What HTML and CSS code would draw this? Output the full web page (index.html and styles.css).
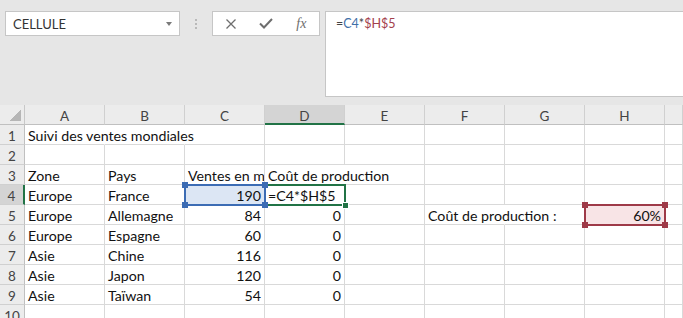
FILE: index.html
```html
<!DOCTYPE html>
<html lang="fr">
<head>
<meta charset="utf-8">
<title>Excel</title>
<link rel="stylesheet" href="styles.css">
</head>
<body>
<div class="app">
  <div class="fbar">
    <div class="namebox"><span>CELLULE</span><span class="dd"></span></div>
    <div class="grip"><i></i><i></i><i></i></div>
    <div class="btns">
      <span class="btn"><svg width="12" height="12" viewBox="0 0 12 12"><path d="M1.5 1.5 L10.5 10.5 M10.5 1.5 L1.5 10.5" stroke="#6e6e6e" stroke-width="1.3" fill="none"/></svg></span>
      <span class="btn"><svg width="14" height="11" viewBox="0 0 14 11"><path d="M1 5.5 L5 9.5 L13 1" stroke="#6e6e6e" stroke-width="2" fill="none"/></svg></span>
      <span class="btn fx">fx</span>
    </div>
    <div class="finput"><span>=</span><span class="rb">C4</span><span>*</span><span class="rr">$H$5</span></div>
  </div>
  <div class="sheet">
    <div class="corner"></div>
    <div class="ch">A</div><div class="ch">B</div><div class="ch">C</div><div class="ch chs">D</div><div class="ch">E</div><div class="ch">F</div><div class="ch">G</div><div class="ch">H</div><div class="ch"></div>

    <div class="rh">1</div>
    <div class="c nr">Suivi des ventes mondiales</div><div class="c nr"></div><div class="c"></div><div class="c"></div><div class="c"></div><div class="c"></div><div class="c"></div><div class="c"></div><div class="c"></div>

    <div class="rh">2</div>
    <div class="c"></div><div class="c"></div><div class="c"></div><div class="c"></div><div class="c"></div><div class="c"></div><div class="c"></div><div class="c"></div><div class="c"></div>

    <div class="rh">3</div>
    <div class="c">Zone</div><div class="c">Pays</div><div class="c clip">Ventes en m</div><div class="c nr">Coût de production</div><div class="c"></div><div class="c"></div><div class="c"></div><div class="c"></div><div class="c"></div>

    <div class="rh rhs">4</div>
    <div class="c">Europe</div><div class="c">France</div>
    <div class="c n selb">190<span class="ov ovb"><i class="h tl"></i><i class="h tr"></i><i class="h bl"></i><i class="h br"></i></span></div>
    <div class="c act">=C4*$H$5<span class="ov ovg"><i class="fh"></i></span></div>
    <div class="c"></div><div class="c"></div><div class="c"></div><div class="c"></div><div class="c"></div>

    <div class="rh">5</div>
    <div class="c">Europe</div><div class="c">Allemagne</div><div class="c n">84</div><div class="c n">0</div><div class="c"></div><div class="c nr">Coût de production :</div><div class="c"></div>
    <div class="c n selr">60%<span class="ov ovr"><i class="h tl"></i><i class="h tr"></i><i class="h bl"></i><i class="h br"></i></span></div>
    <div class="c"></div>

    <div class="rh">6</div>
    <div class="c">Europe</div><div class="c">Espagne</div><div class="c n">60</div><div class="c n">0</div><div class="c"></div><div class="c"></div><div class="c"></div><div class="c"></div><div class="c"></div>

    <div class="rh">7</div>
    <div class="c">Asie</div><div class="c">Chine</div><div class="c n">116</div><div class="c n">0</div><div class="c"></div><div class="c"></div><div class="c"></div><div class="c"></div><div class="c"></div>

    <div class="rh">8</div>
    <div class="c">Asie</div><div class="c">Japon</div><div class="c n">120</div><div class="c n">0</div><div class="c"></div><div class="c"></div><div class="c"></div><div class="c"></div><div class="c"></div>

    <div class="rh">9</div>
    <div class="c">Asie</div><div class="c">Taïwan</div><div class="c n">54</div><div class="c n">0</div><div class="c"></div><div class="c"></div><div class="c"></div><div class="c"></div><div class="c"></div>

    <div class="rh">10</div>
    <div class="c"></div><div class="c"></div><div class="c"></div><div class="c"></div><div class="c"></div><div class="c"></div><div class="c"></div><div class="c"></div><div class="c"></div>
  </div>
</div>
</body>
</html>
```
FILE: styles.css
```css
* { box-sizing: border-box; }
html, body { margin: 0; padding: 0; }
body {
  background: #e6e6e6;
  width: 683px;
  height: 318px;
  overflow: hidden;
  font-family: Lato, "Liberation Sans", sans-serif;
}
.app { width: 683px; }

.fbar {
  display: flex;
  align-items: flex-start;
  height: 97px;
  padding: 11px 0 0 5px;
}
.namebox {
  width: 175px;
  height: 25px;
  background: #fff;
  border: 1px solid #c6c6c6;
  display: flex;
  align-items: center;
  justify-content: space-between;
  padding: 0 7px 0 7px;
  font-size: 13px;
  color: #333;
}
.dd {
  width: 0; height: 0;
  border-left: 3px solid transparent;
  border-right: 3px solid transparent;
  border-top: 4px solid #7a7a7a;
}
.grip {
  width: 32px;
  height: 25px;
  display: flex;
  flex-direction: column;
  align-items: center;
  justify-content: center;
  gap: 2px;
}
.grip i { display: block; width: 2px; height: 2px; background: #b9b9b9; }
.btns {
  width: 108px;
  height: 25px;
  background: #fff;
  border: 1px solid #c6c6c6;
  display: grid;
  grid-template-columns: repeat(3, 1fr);
  align-items: center;
  justify-items: center;
}
.btn { display: flex; align-items: center; justify-content: center; height: 23px; }
.fx {
  font-family: "Liberation Serif", serif;
  font-style: italic;
  font-size: 14px;
  color: #6e6e6e;
}
.finput {
  flex: 1;
  margin-left: 5px;
  height: 86px;
  background: #fff;
  border: 1px solid #c6c6c6;
  border-right: none;
  padding: 4px 10px;
  font-size: 12.5px;
  line-height: 16px;
  color: #444;
}
.rb { color: #3f6fa8; }
.rr { color: #a3404c; }

.sheet {
  margin-top: 8px;
  display: grid;
  grid-template-columns: 25px repeat(8, 80px) 18px;
  grid-auto-rows: 20px;
  background: #fff;
  width: 683px;
  height: 213px;
  overflow: hidden;
}
.corner {
  background: linear-gradient(135deg, transparent 50%, #b6b6b6 50%) right 3px bottom 3px / 12px 12px no-repeat, #ececec;
  border-right: 1px solid #c8c8c8;
  border-bottom: 1px solid #c0c0c0;
}
.ch {
  background: #ececec;
  border-right: 1px solid #d0d0d0;
  border-bottom: 1px solid #c0c0c0;
  text-align: center;
  font-size: 13.5px;
  line-height: 18px;
  padding-top: 2px;
  color: #444;
}
.chs { background: #d4d4d4; border-bottom: 2px solid #217346; }
.rh {
  background: #ececec;
  border-right: 1px solid #c0c0c0;
  border-bottom: 1px solid #d0d0d0;
  text-align: center;
  font-size: 13.5px;
  line-height: 18px;
  padding-top: 2px;
  color: #444;
}
.rhs { background: #d4d4d4; border-right: 2px solid #217346; }

.c {
  border-right: 1px solid #d9d9d9;
  border-bottom: 1px solid #d9d9d9;
  font-size: 14.2px;
  line-height: 18px;
  padding: 2px 3px 0;
  white-space: nowrap;
  color: #111;
}
.nr { border-right-color: transparent; }
.clip { overflow: hidden; text-overflow: clip; padding-right: 0; }
.n { text-align: right; }

.selb, .selr, .act { position: relative; }
.selb { background: #dce6f4; }
.selr { background: #f8e4e6; }
.ov {
  position: absolute;
  left: -1px; top: -1px; right: -2px; bottom: -2px;
  border: 2px solid;
}
.ovb { border-color: #3c6cb4; z-index: 3; }
.ovg { border-color: #217346; z-index: 2; }
.ovr { border-color: #9e3a48; z-index: 3; }
.h {
  position: absolute;
  width: 6px; height: 6px;
}
.ovb .h { background: #3c6cb4; }
.ovr .h { background: #9e3a48; }
.tl { left: -4px; top: -4px; }
.tr { right: -4px; top: -4px; }
.bl { left: -4px; bottom: -4px; }
.br { right: -4px; bottom: -4px; }
.fh {
  position: absolute;
  right: -5px; bottom: -5px;
  width: 7px; height: 7px;
  background: #217346;
  border: 1px solid #fff;
}
```
